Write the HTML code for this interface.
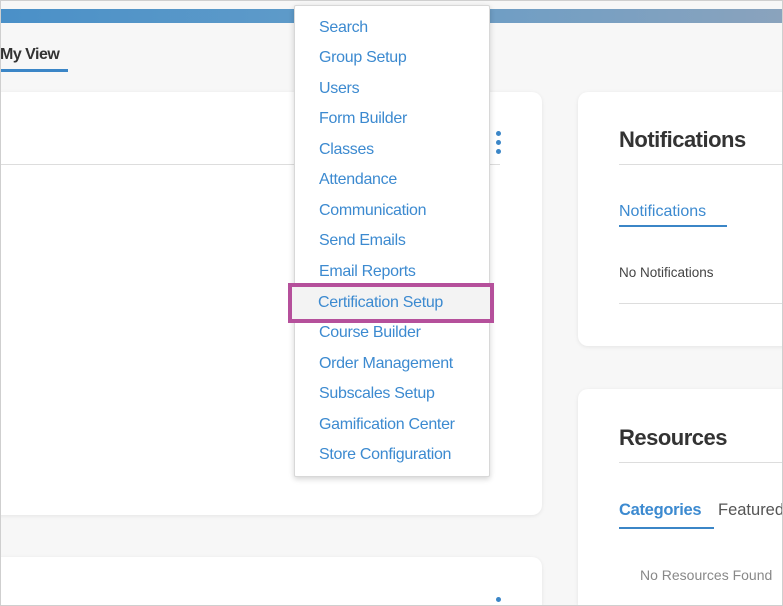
<!DOCTYPE html>
<html style="width:783px;height:606px;overflow:hidden"><head><style>
body{margin:0;width:783px;height:606px;overflow:hidden;background:#f7f7f7;font-family:"Liberation Sans",sans-serif;position:relative}
.frame{position:absolute;left:0;top:0;width:783px;height:606px;border:1px solid #cfcfcf;box-sizing:border-box;pointer-events:none;z-index:10}
.bar{position:absolute;left:0;top:9px;width:783px;height:14px;background:linear-gradient(90deg,#4a90c8,#5f9bc9 40%,#8aa3bd)}
.tab{position:absolute;left:0;top:46px;font-size:16px;font-weight:bold;color:#333;letter-spacing:-0.5px}
.tabline{position:absolute;left:0;top:69px;width:68px;height:3px;background:#3b86c7}
.card{position:absolute;background:#fff;border-radius:10px;box-shadow:0 1px 4px rgba(0,0,0,.08)}
.menu{position:absolute;left:294px;top:5px;width:194px;height:470px;background:#fff;border:1px solid #d8d8d8;box-shadow:0 2px 6px rgba(0,0,0,.18);border-radius:2px}
.menu div{position:absolute;left:24px;font-size:16px;color:#3c8ad0;letter-spacing:-0.3px;white-space:nowrap}
.hl{position:absolute;left:288px;top:283px;width:206px;height:40px;box-sizing:border-box;border:4px solid #b5509b;background:#f3f3f3}
.dots span{position:absolute;width:5px;height:5px;border-radius:50%;background:#3b86c7}
</style></head><body>
<div class="bar"></div>
<div class="tab">My View</div><div class="tabline"></div>
<div class="card" style="left:-10px;top:92px;width:552px;height:423px"></div>
<div style="position:absolute;left:0;top:164px;width:500px;height:1px;background:#ddd"></div>
<div class="dots"><span style="left:496px;top:131px"></span><span style="left:496px;top:140px"></span><span style="left:496px;top:149px"></span></div>
<div class="card" style="left:-10px;top:557px;width:552px;height:49px;border-radius:10px 10px 0 0"></div>
<div class="dots"><span style="left:496px;top:597px"></span></div>
<div class="card" style="left:578px;top:92px;width:215px;height:254px"></div>
<div style="position:absolute;left:619px;top:127px;font-size:22px;font-weight:bold;color:#333;letter-spacing:-0.5px">Notifications</div>
<div style="position:absolute;left:619px;top:164px;width:164px;height:1px;background:#ddd"></div>
<div style="position:absolute;left:619px;top:203px;font-size:16px;color:#3c8ad0">Notifications</div>
<div style="position:absolute;left:619px;top:225px;width:108px;height:2px;background:#3b86c7"></div>
<div style="position:absolute;left:619px;top:265px;font-size:13.5px;color:#444">No Notifications</div>
<div style="position:absolute;left:619px;top:303px;width:164px;height:1px;background:#ddd"></div>
<div class="card" style="left:578px;top:389px;width:215px;height:217px;border-radius:10px 0 0 0"></div>
<div style="position:absolute;left:619px;top:425px;font-size:22px;font-weight:bold;color:#333;letter-spacing:-0.5px">Resources</div>
<div style="position:absolute;left:619px;top:462px;width:164px;height:1px;background:#ddd"></div>
<div style="position:absolute;left:619px;top:501px;font-size:16.5px;font-weight:bold;color:#3c8ad0;letter-spacing:-0.3px">Categories</div>
<div style="position:absolute;left:718px;top:501px;font-size:16.5px;color:#555;white-space:nowrap">Featured</div>
<div style="position:absolute;left:619px;top:527px;width:95px;height:2px;background:#3b86c7"></div>
<div style="position:absolute;left:640px;top:567px;font-size:14px;color:#888;white-space:nowrap">No Resources Found</div>
<div class="menu">
<div style="top:13px">Search</div>
<div style="top:43px">Group Setup</div>
<div style="top:74px">Users</div>
<div style="top:104px">Form Builder</div>
<div style="top:135px">Classes</div>
<div style="top:165px">Attendance</div>
<div style="top:196px">Communication</div>
<div style="top:226px">Send Emails</div>
<div style="top:257px">Email Reports</div>
<div style="top:318px">Course Builder</div>
<div style="top:349px">Order Management</div>
<div style="top:379px">Subscales Setup</div>
<div style="top:410px">Gamification Center</div>
<div style="top:440px">Store Configuration</div>
</div>
<div class="hl"><div style="position:absolute;left:26px;top:7px;font-size:16px;color:#3c8ad0;letter-spacing:-0.3px;white-space:nowrap">Certification Setup</div></div>
<div class="frame"></div>
</body></html>
